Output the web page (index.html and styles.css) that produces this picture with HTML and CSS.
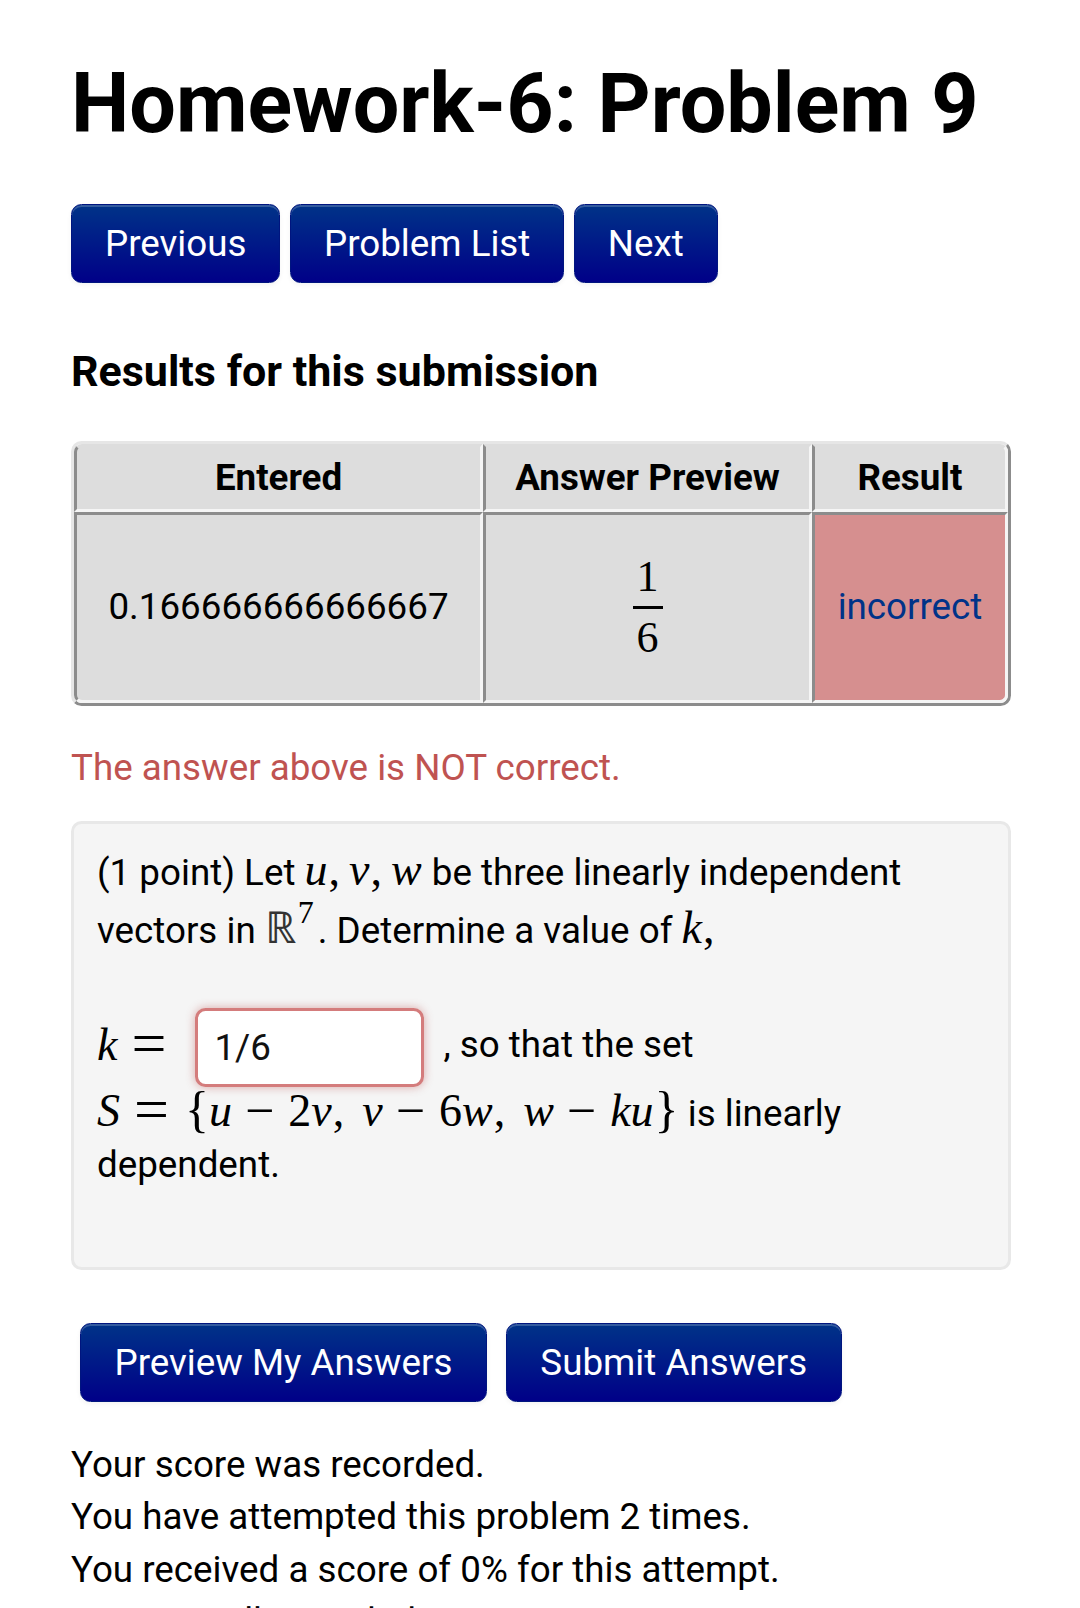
FILE: index.html
```html
<!DOCTYPE html>
<html lang="en">
<head>
  <meta charset="UTF-8"/>
  <meta name="viewport" content="width=device-width,initial-scale=1"/>
  <title>Homework-6: Problem 9</title>
  <link rel="stylesheet" href="styles.css">
</head>
<body>
  <h1>Homework-6: Problem 9</h1>

  <div class="nav">
    <a class="btn">Previous</a>
    <a class="btn">Problem List</a>
    <a class="btn">Next</a>
  </div>

  <h2>Results for this submission</h2>

  <table class="results">
    <tr>
      <th class="col-entered">Entered</th>
      <th class="col-preview">Answer Preview</th>
      <th class="col-result">Result</th>
    </tr>
    <tr>
      <td>0.166666666666667</td>
      <td>
        <span class="frac"><span class="num">1</span><span class="den">6</span></span>
      </td>
      <td class="incorrect"><a>incorrect</a></td>
    </tr>
  </table>

  <p class="error">The answer above is NOT correct.</p>

  <div class="problem">
    <div class="line first">(1 point) Let <span class="m"><i>u</i>, <i>v</i>, <i>w</i></span> be three linearly independent</div>
    <div class="line">vectors in <span class="m"><span class="bb">ℝ</span><sup>7</sup></span>. Determine a value of <span class="m"><i>k</i>,</span></div>
    <div class="line answer"><span class="m lift"><i>k</i><span class="eq">=</span></span><input class="answer-box" type="text" value="1/6"><span class="lift">, so that the set</span></div>
    <div class="line set"><span class="m"><i>S</i><span class="eq">=</span><span class="brace">{</span><i>u</i><span class="op">−</span>2<i>v</i>,<span class="sep"></span><i>v</i><span class="op">−</span>6<i>w</i>,<span class="sep"></span><i>w</i><span class="op">−</span><i>ku</i><span class="brace">}</span></span> is linearly</div>
    <div class="line">dependent.</div>
  </div>

  <div class="submit">
    <a class="btn">Preview My Answers</a>
    <a class="btn">Submit Answers</a>
  </div>

  <div class="score">
    <div>Your score was recorded.</div>
    <div>You have attempted this problem 2 times.</div>
    <div>You received a score of 0% for this attempt.</div>
    <div>Your overall recorded score is 0%.</div>
  </div>
</body>
</html>
```

FILE: styles.css
```css
html { overflow: hidden; }
body {
  margin: 0; padding: 0 69px 0 71px; background: #fff; color: #000;
  font-family: Roboto, sans-serif; font-size: 36.75px; line-height: 52.5px;
}
h1 { margin: 0; padding-top: 58px; font-size: 82.6px; line-height: 92px; font-weight: 700; }
h2 { margin: 0; padding-top: 62px; font-size: 43px; line-height: 52px; font-weight: 700; }

.btn {
  display: inline-block; box-sizing: border-box; height: 79px;
  padding: 0 33px; line-height: 77px; color: #fff;
  background: linear-gradient(#003388, #000088);
  border: 1px solid #00157f; border-radius: 10.5px;
  box-shadow: inset 0 2px 0 rgba(255,255,255,.2), 0 2px 5px rgba(0,0,0,.05);
}
.nav { display: flex; gap: 9.5px; margin-top: 54px; }
.submit { display: flex; gap: 19px; margin: 53px 0 0 9px; }
.submit .btn { padding: 0 33.5px; }

.results {
  margin-top: 44px; width: 940px; table-layout: fixed; border-collapse: separate; border-spacing: 0;
  border: 3px solid; border-color: #e6e6e6 #8c8c8c #8c8c8c #e6e6e6; border-radius: 10.5px;
  text-align: center;
}
.results th, .results td {
  padding: 0; background: #ddd;
  border: 3px solid; border-color: #8c8c8c #f5f5f5 #f5f5f5 #8c8c8c;
}
.results th { height: 62px; font-weight: 700; border-top-color: #ddd; }
.results td { height: 185px; }
.col-entered { width: 403px; }
.col-preview { width: 323px; }
.results th:first-child { border-top-left-radius: 8px; }
.results th:last-child { border-top-right-radius: 8px; }
.results tr:last-child td:first-child { border-bottom-left-radius: 8px; }
.results tr:last-child td:last-child { border-bottom-right-radius: 8px; }
.results td.incorrect { background: #d68f8f; }
.incorrect a { color: #003388; }

.frac {
  display: inline-flex; flex-direction: column; vertical-align: middle;
  font-family: "Liberation Serif", serif; font-size: 44px; line-height: 58px;
}
.num { padding: 0 4px; border-bottom: 3px solid #000; }

.error { margin: 36px 0 0; color: #bf5351; }

.problem {
  box-sizing: border-box; height: 449px; margin-top: 26px; padding: 20px 23px;
  background: #f5f5f5; border: 3px solid #e8e8e8; border-radius: 10.5px;
}
.line { height: 52.5px; }
.first { height: 58px; }
.answer { height: 78px; margin-top: 54px; display: flex; align-items: center; }
.set { height: 54px; margin-top: -1px; }
.lift { position: relative; top: -2px; }
.m { font-family: "Liberation Serif", serif; font-size: 46px; word-spacing: -2.5px; }
.m i { margin-right: 1px; }
.m sup { font-size: 32px; line-height: 0; margin: 0 4px 0 2px; vertical-align: 20px; }
.bb { font-family: "DejaVu Sans", sans-serif; font-size: 44px; font-weight: 200; color: #333; }
.eq { margin: 0 16px 0 13px; font-size: 62px; line-height: 0; vertical-align: -4px; }
.op { margin: 0 14px 0 12px; font-size: 52px; line-height: 0; vertical-align: -2px; }
.sep { display: inline-block; width: 18px; }
.brace { font-size: 50px; line-height: 0; }
.answer-box {
  box-sizing: border-box; width: 229px; height: 79px; margin: 0 19px 0 13px; padding: 0 16px;
  font: 36.75px Roboto, sans-serif; color: #111; background: #fff;
  border: 3px solid #d47c7c; border-radius: 10.5px; outline: none;
  box-shadow: 0 0 10px rgba(185,74,72,.45);
}

.score { margin-top: 37px; }
```
